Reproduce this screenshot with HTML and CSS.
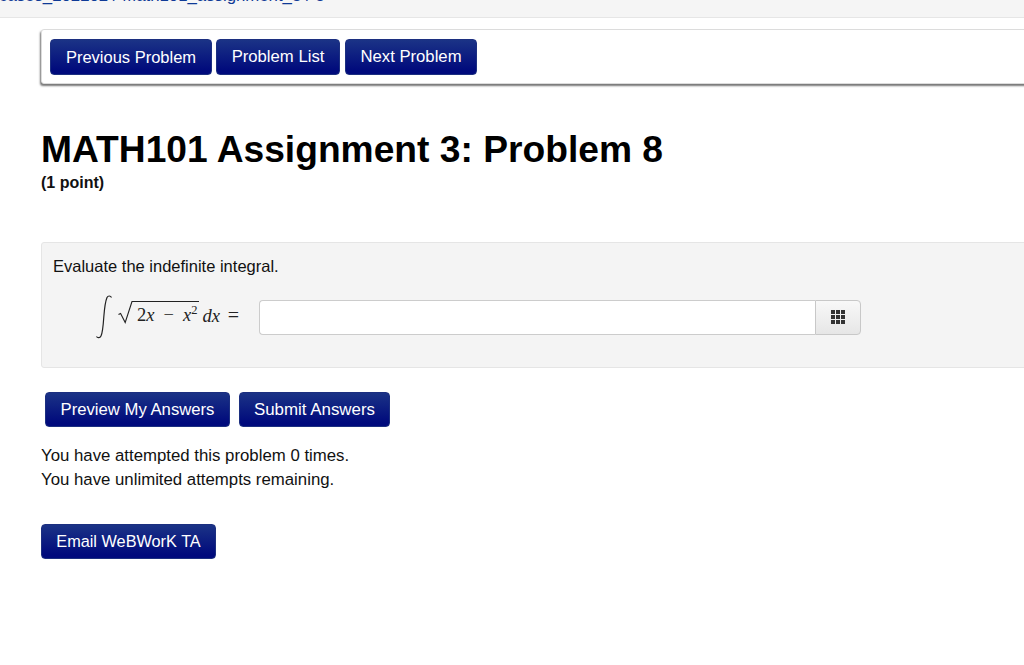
FILE: index.html
```html
<!DOCTYPE html>
<html lang="en">
<head>
<meta charset="utf-8">
<title>MATH101 Assignment 3: Problem 8</title>
<link rel="stylesheet" href="styles.css">
</head>
<body>
<nav class="crumbs"><span class="crumbs-text">cases_202202 / Math101_assignment_3 / 8</span></nav>
<main class="page">
  <div class="toolbar">
    <a class="btn prev">Previous Problem</a>
    <a class="btn list">Problem List</a>
    <a class="btn next">Next Problem</a>
  </div>
  <h1 class="title">MATH101 Assignment 3: Problem 8</h1>
  <p class="points">(1 point)</p>
  <section class="problem">
    <p class="prompt">Evaluate the indefinite integral.</p>
    <div class="answer-row">
      <div class="math">
        <svg class="integral" width="18" height="44" viewBox="0 0 18 44" aria-hidden="true"><path d="M16.5 2.5 C15.5 0.5 13 0.5 12 2.5 C10.5 6 9.5 13 8.8 22 C8.2 31 7.5 38 6 41 C5 43 2.5 43.2 1.5 41.5" fill="none" stroke="#222" stroke-width="1.2"/></svg>
        <svg class="radical" width="15" height="23" viewBox="0 0 15 23" aria-hidden="true"><path d="M0.5 13.5 L2.6 12.4 L7.2 21.5 L14 0.5 L15 0.5" fill="none" stroke="#222" stroke-width="1.1"/></svg>
        <span class="radicand">2<i>x</i><span class="minus">−</span><i>x</i><sup>2</sup></span>
        <span class="dx"><i>dx</i><span class="equals">=</span></span>
      </div>
      <div class="input-group">
        <input class="answer" type="text" aria-label="answer">
        <button class="palette" type="button" aria-label="Equation editor">
          <svg class="palette-icon" width="14" height="14" viewBox="0 0 14 14" aria-hidden="true"><path d="M0 0h4v4H0zM5 0h4v4H5zM10 0h4v4h-4zM0 5h4v4H0zM5 5h4v4H5zM10 5h4v4h-4zM0 10h4v4H0zM5 10h4v4H5zM10 10h4v4h-4z" fill="#333"/></svg>
        </button>
      </div>
    </div>
  </section>
  <div class="actions">
    <a class="btn preview">Preview My Answers</a>
    <a class="btn submit">Submit Answers</a>
  </div>
  <p class="status">You have attempted this problem 0 times.<br>You have unlimited attempts remaining.</p>
  <a class="btn email">Email WeBWorK TA</a>
</main>
</body>
</html>
```
FILE: styles.css
```css
html, body { margin: 0; padding: 0; background: #fff; overflow: hidden; height: 100%; }
body { font-family: "Liberation Sans", Arial, sans-serif; font-size: 16.5px; color: #111; }
.crumbs { height: 17px; overflow: hidden; background: #f5f5f5; border-bottom: 1px solid #e6e6e6; }
.crumbs-text { display: block; margin-top: -14px; margin-left: -1px; color: #0f3a96; font-size: 16.8px; line-height: 20px; white-space: nowrap; }
.page { padding: 11px 0 0 41px; width: 1100px; }
.toolbar { display: flex; gap: 4px; padding: 9px 8px; height: 35px; width: 1040px; background: #fff; border: 1px solid #dcdcdc; border-radius: 3px; box-shadow: -1px 2px 2px #777; }
.btn { display: inline-flex; align-items: center; justify-content: center; box-sizing: border-box; height: 36px; color: #fff; font-size: 16.7px; background: linear-gradient(#1b3386, #000a7c 90%); border: 1px solid #1c2f80; border-radius: 4px; white-space: nowrap; }
.prev { width: 162px; font-size: 16.5px; }
.list { width: 124px; }
.next { width: 132px; margin-left: 1px; }
.title { margin: 43px 0 0; font-size: 37.2px; line-height: 44px; font-weight: bold; color: #000; }
.points { margin: 2px 0 0; font-size: 16px; line-height: 20px; font-weight: bold; color: #111; }
.problem { margin-top: 49px; box-sizing: border-box; height: 126px; width: 1040px; padding: 13px 11px; background: #f4f4f4; border: 1px solid #e5e5e5; border-radius: 3px; }
.prompt { margin: 0; line-height: 20px; }
.answer-row { display: flex; margin-top: 24px; height: 35px; }
.math { display: flex; align-items: flex-start; width: 206px; padding-left: 42px; box-sizing: border-box; font-family: "Liberation Serif", serif; font-size: 18.5px; color: #222; }
.integral { flex: none; margin: -5px 5px 0 0; }
.radical { flex: none; margin-top: 1px; }
.radicand { margin-top: 1px; padding: 3px 2px 0 4px; border-top: 1px solid #222; line-height: 21px; white-space: nowrap; }
.radicand sup { font-size: 12.5px; line-height: 0; vertical-align: 7px; }
.minus { margin: 0 9px; }
.dx { margin: 5px 0 0 3px; line-height: 21px; white-space: nowrap; }
.equals { margin-left: 8px; font-size: 20px; }
.input-group { display: flex; width: 602px; height: 35px; }
.answer { flex: 1; min-width: 0; box-sizing: border-box; height: 35px; margin: 0; background: #fff; border: 1px solid #ccc; border-right: 0; border-radius: 4px 0 0 4px; outline: 0; }
.palette { display: flex; align-items: center; justify-content: center; box-sizing: border-box; width: 46px; height: 35px; padding: 0 0 2px; background: linear-gradient(#f8f8f8, #e6e6e6); border: 1px solid #c8c8c8; border-radius: 0 4px 4px 0; }
.actions { display: flex; gap: 9px; margin: 24px 0 0 4px; }
.actions .btn { height: 35px; }
.preview { width: 185px; }
.submit { width: 151px; font-size: 16.9px; }
.status { margin: 17px 0 0; font-size: 16.8px; line-height: 24px; color: #111; }
.email { width: 175px; margin-top: 32px; font-size: 16.3px; height: 35px; }
```
